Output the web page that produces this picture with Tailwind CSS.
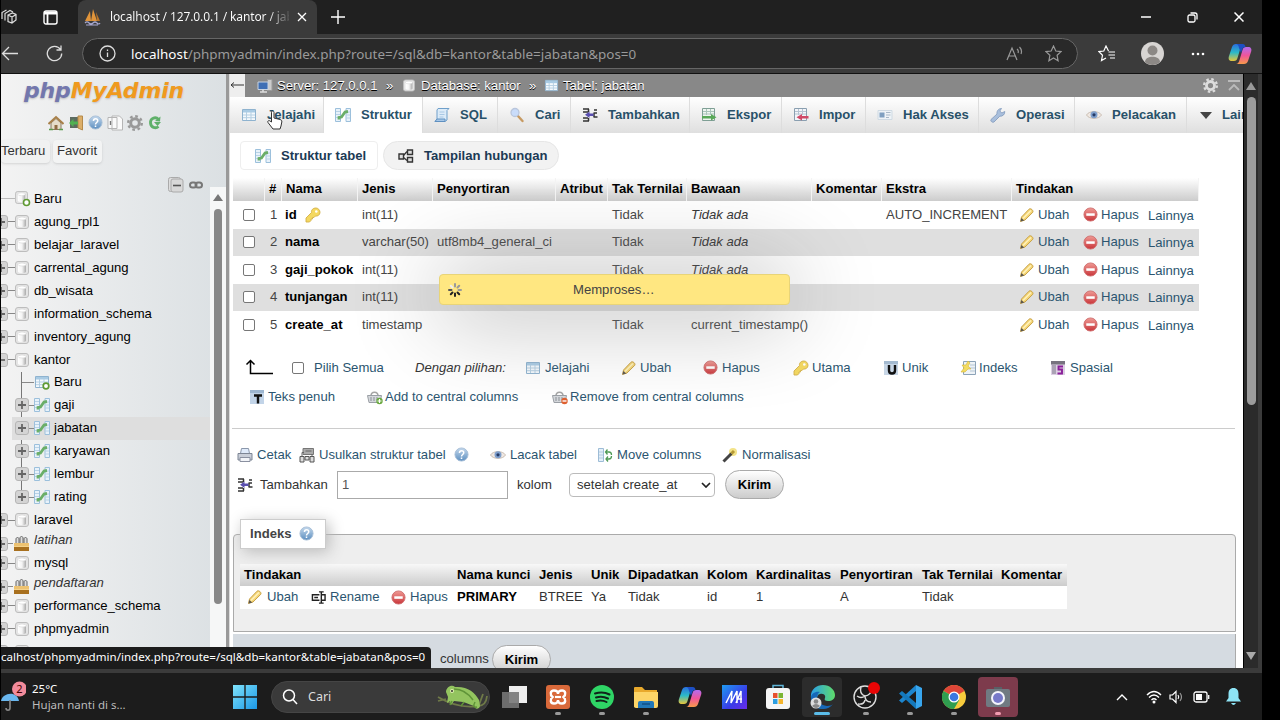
<!DOCTYPE html>
<html lang="id">
<head>
    <meta charset="UTF-8">
    <meta name="viewport" content="width=device-width, initial-scale=1.0">
    <title>localhost / 127.0.0.1 / kantor / jabatan | phpMyAdmin</title>
    <script src="https://cdn.jsdelivr.net/npm/@tailwindcss/browser@4"></script>
    <style>
        body { font-family: 'Liberation Sans', Arial, sans-serif; }
        .ui { font-family: 'Noto Sans', 'Open Sans', sans-serif; }
        .logo { font-family: 'DejaVu Sans', sans-serif; }
    </style>
</head>
<body class="bg-black w-[1280px] h-[720px] overflow-hidden text-[13.1px] leading-4 text-[#444] whitespace-nowrap">

    <!-- Icons -->
    <svg class="absolute w-0 h-0">
        <defs>
            <linearGradient id="gCyl"><stop offset="0" stop-color="#fff"/><stop offset=".5" stop-color="#f4f4f4"/><stop offset="1" stop-color="#aaa"/></linearGradient>
            <linearGradient id="gRed" x2="0" y2="1"><stop offset="0" stop-color="#ef9a94"/><stop offset="1" stop-color="#c9353a"/></linearGradient>
            <linearGradient id="gBlue" x2="0" y2="1"><stop offset="0" stop-color="#c4d8ec"/><stop offset="1" stop-color="#5d8fc0"/></linearGradient>
            <linearGradient id="gWin" x2="1" y2="1"><stop offset="0" stop-color="#7fe3fb"/><stop offset="1" stop-color="#1b97e6"/></linearGradient>
            <linearGradient id="gCopA" x2="0" y2="1"><stop offset="0" stop-color="#2a6fe0"/><stop offset=".5" stop-color="#2cb9c8"/><stop offset="1" stop-color="#e8c63a"/></linearGradient>
            <linearGradient id="gCopB" x2="0" y2="1"><stop offset="0" stop-color="#b26cf0"/><stop offset=".5" stop-color="#f0559a"/><stop offset="1" stop-color="#f79a4a"/></linearGradient>
            <linearGradient id="gMs" x2="1" y2="1"><stop offset="0" stop-color="#1e9bf0"/><stop offset=".6" stop-color="#3a3be8"/><stop offset="1" stop-color="#6a2be8"/></linearGradient>
            <linearGradient id="gEdge" x2="1"><stop offset="0" stop-color="#2a9fe8"/><stop offset="1" stop-color="#5fdc6a"/></linearGradient>
        </defs>
        <symbol id="i-browse" viewBox="0 0 16 16"><path d="M1.500 2.500h13v11h-13z" fill="#f4f9fd" stroke="#8fb3cf"/><path d="M2 3h12v2.500H2z" fill="#a9cbe4"/><path d="M2 8h12M2 10.700h12M5.500 5v8M10 5v8" stroke="#b5cfe2" fill="none"/></symbol>
        <symbol id="i-struct" viewBox="0 0 16 16"><path d="M.5 1.500h5v13h-5zM11 1.500h4.500v13H11z" fill="#e8f2fa" stroke="#9cc0dc"/><path d="M1 4.500h4M1 7.500h4M1 10.500h4M11 5h4M11 8h4M11 11h4" stroke="#b8d2e6"/><path d="M4 12.500V10.500l2.500-.5L10 5l3-.5" stroke="#6aae68" stroke-width="2.800" fill="none"/></symbol>
        <symbol id="i-sql" viewBox="0 0 16 16"><path d="M4 1.500h11l-2 2v9.500l-2 1.500H1l2-2V3z" fill="#dcebf8" stroke="#6f9fca"/><path d="M5.500 5h5M5.500 7.500h5M5.500 10h4" stroke="#a9c8e4"/><path d="M1 14.500 3 12h8v2.500z" fill="#a8c8e8" stroke="#5f90c0"/></symbol>
        <symbol id="i-search" viewBox="0 0 16 16"><path d="m9 9 4.500 5" stroke="#c79a62" stroke-width="2.400" stroke-linecap="round"/><circle cx="6" cy="5.500" r="4" fill="#c9dcfa" stroke="#b9c6dc" stroke-width="1.300"/></symbol>
        <symbol id="i-insert" viewBox="0 0 16 16"><path d="M1 2h6M1 5h5M1 11h5M1 14h6M6.500 2v3M6.500 11v3M12 3h3M11.500 6h3.500M11.500 10h4M12 6v4" fill="none" stroke="#333" stroke-width="1.500"/><path d="M3 7.800 7.500 4.500v2h4v2.600h-4v2z" fill="#5a4fb0"/></symbol>
        <symbol id="i-export" viewBox="0 0 16 16"><path d="M1.500 1.500h12v12h-12z" fill="#eef5f0" stroke="#7f9f95"/><path d="M2 4.500h11M2 7h11M5.500 2v6M9.500 2v6" stroke="#a9c4ba"/><path d="M1 9h9V7l5.500 3.300L10 13.500V11.500H1z" fill="#58a858"/></symbol>
        <symbol id="i-import" viewBox="0 0 16 16"><path d="M1.500 1.500h12v12h-12z" fill="#f3f5f9" stroke="#8a9fb0"/><path d="M2 4.500h11M2 7h11M5.500 2v6M9.500 2v6" stroke="#b6c3d2"/><path d="M15.500 9H9V7l-5.500 3.300L9 13.500V11.500h6.500z" fill="#d04a68"/></symbol>
        <symbol id="i-rights" viewBox="0 0 16 16"><path d="M1 3.500h14v9H1z" fill="#eef3f7" stroke="#cfdae3"/><path d="M2.500 5.500h5v5h-5z" fill="#7f9fc0"/><path d="M9 5.500h4.500M9 8h4.500M9 10.500h3" stroke="#a8b8c8"/></symbol>
        <symbol id="i-tool" viewBox="0 0 16 16"><path d="M1 12.500 7 7c-.5-3 1.500-5.500 4.500-5.500L9.800 4l2 2 3-1.500c.2 3-2.300 5-5 4.700L4 15c-1.500 1-4-1-3-2.500z" fill="#a9bfdc" stroke="#7f98bb" stroke-width=".8"/></symbol>
        <symbol id="i-eye" viewBox="0 0 16 16"><path d="M.5 8C3 3.500 13 3.500 15.500 8 13 12.500 3 12.500.5 8z" fill="#f0e8e2" stroke="#c9bdb2"/><circle cx="8" cy="7.800" r="3.500" fill="#7f9fcc"/><circle cx="8" cy="7.800" r="1.600" fill="#253a66"/></symbol>
        <symbol id="i-rel" viewBox="0 0 16 16"><path d="M1 6h4.500v5H1zM9.500 2h5v4.500h-5zM9.500 9.500h5V14h-5z" fill="#ddd" stroke="#333" stroke-width="1.400"/><path d="M5.500 7.500 9 3.500M5.500 9.500 9 12.500" stroke="#333" stroke-width="1.300" fill="none"/></symbol>
        <symbol id="i-edit" viewBox="0 0 16 16"><path d="M1.500 14.500 2.500 10 10 2.200c1.500-1.500 5 1.300 3.700 3.200L6 13z" fill="#f6d778" stroke="#c29a3d" stroke-width=".9"/><path d="m4 11.500 8-8" stroke="#fff3bf" stroke-width="1.300"/><path d="m1.500 14.500.8-3.500 3 2.500z" fill="#5a564f"/></symbol>
        <symbol id="i-drop" viewBox="0 0 16 16"><circle cx="8" cy="8" r="7" fill="url(#gRed)" stroke="#d07070"/><path d="M3.500 6.700h9v2.700h-9z" fill="#fff"/></symbol>
        <symbol id="i-key" viewBox="0 0 16 16"><path d="M1 14v-3l5.500-5.500C6 3 8 1 11 1c2 0 4 2 4 4.300 0 2.700-2.500 4.200-4.500 3.700L9 10.500H7.500V12H6v1.500L4.500 15H1z" fill="#f4d860" stroke="#d3b04a" stroke-width=".9"/><circle cx="11.300" cy="4.500" r="1.300" fill="#fff"/></symbol>
        <symbol id="i-unique" viewBox="0 0 16 16"><path d="M1 1h14v14H1z" fill="#c7d6e6"/><path d="M1 1h14v3H1z" fill="#a4bad0"/><path d="M6 5v5.500c0 4 6 4 6 0V5" stroke="#111" stroke-width="2.400" fill="none"/></symbol>
        <symbol id="i-index" viewBox="0 0 16 16"><path d="M3.500 1.500h12v13h-12z" fill="#eef3f7" stroke="#8ca3b8"/><path d="M10 5h5M10 8h5M10 11h5" stroke="#b5c5d3"/><path d="m8 1-2 4H2l2 3-3 4h4l3-3h3L8 6l2-3z" fill="#f3dc62" stroke="#d5b53a" stroke-width=".6"/></symbol>
        <symbol id="i-spatial" viewBox="0 0 16 16"><path d="M1 1h14v14H1z" fill="#dccfe3"/><path d="M1 1h14v3.500H1z" fill="#77737f"/><path d="M2 5h4v9H2z" fill="#aaa2b4"/><path d="M13 6.500H8.500v3H12v4H7.500" stroke="#8a1f99" stroke-width="1.900" fill="none"/></symbol>
        <symbol id="i-text" viewBox="0 0 16 16"><path d="M1 1h14v14H1z" fill="#c2d4e8"/><path d="M1 1h14v3H1z" fill="#9db6d0"/><path d="M5 6.500h8M9 6v8.500" stroke="#111" stroke-width="2.400"/></symbol>
        <symbol id="i-basket" viewBox="0 0 16 16"><path d="M4 7c0-5 7-5 7 0" fill="none" stroke="#a5a5a5" stroke-width="1.500"/><path d="M.5 6.500h14l-1.500 7H2z" fill="#d5d8dc" stroke="#9a9fa5"/><path d="M4 8v4M7 8v4M10 8v3" stroke="#8b9096"/></symbol>
        <symbol id="i-central" viewBox="0 0 16 16"><use href="#i-basket"/><circle cx="12.500" cy="12" r="3.200" fill="#69a83f"/><path d="M12.500 10v4M10.500 12h4" stroke="#fff" stroke-width="1.200"/></symbol>
        <symbol id="i-central-del" viewBox="0 0 16 16"><use href="#i-basket"/><circle cx="12.500" cy="12" r="3.200" fill="#e0602f"/><path d="M10.500 12h4" stroke="#fff" stroke-width="1.400"/></symbol>
        <symbol id="i-print" viewBox="0 0 16 16"><path d="M4.500 1.500h7l1 5h-9z" fill="#dfeafa" stroke="#8a97ab"/><path d="M1 6.500h14V13H1z" fill="#c9ced8" stroke="#7d8594"/><path d="M3 10.500h10v4H3z" fill="#f2f4f8" stroke="#8a90a0"/></symbol>
        <symbol id="i-propose" viewBox="0 0 16 16"><path d="M4 1.500h10.500v6H4z" fill="#aaa" stroke="#777"/><path d="M1 9.500h4V15H1zM11 9.500h4V15h-4zM6 9.500h4V13H6z" fill="#ddd" stroke="#555"/><path d="M3 9.500v-4h2M13 9.500V7M6.500 4h6" stroke="#666" fill="none"/></symbol>
        <symbol id="i-help" viewBox="0 0 16 16"><circle cx="8" cy="8" r="7" fill="url(#gBlue)" stroke="#a8bfd8"/><path d="M5.800 6.500c0-3.300 4.600-3 4.600-.3C10.400 8 8 8 8 10M8 11.200v1.500" stroke="#fff" stroke-width="1.600" fill="none"/></symbol>
        <symbol id="i-move" viewBox="0 0 16 16"><path d="M1.500 1.500h5v13h-5z" fill="#e3eff9" stroke="#9dbcd6"/><path d="M2 5h4M2 8h4M2 11h4" stroke="#b4cbe0"/><path d="M8.500 5H12c2 0 2.500 1 2.500 3M10.500 2.500 8.500 5l2 2.500M14.500 9c0 2-1 3-2.500 3H9.500M11 9.500 9 12l2 2.500" stroke="#4f9a55" stroke-width="1.300" fill="none"/></symbol>
        <symbol id="i-wand" viewBox="0 0 16 16"><circle cx="11" cy="5" r="4" fill="#f3e388"/><path d="m1.500 14.500 8-8" stroke="#444" stroke-width="3"/><path d="m9.500 6.500 2.500-2.500" stroke="#b69a35" stroke-width="3"/></symbol>
        <symbol id="i-rename" viewBox="0 0 16 16"><path d="M9 5H1.500v6H9M3.500 8h4M8.500 2h5M8.500 14h5M11 2v12M11 5h4v6h-4" stroke="#222" stroke-width="1.500" fill="none"/></symbol>
        <symbol id="i-db" viewBox="0 0 14 14"><rect x=".5" y=".5" width="13" height="13" rx="2.500" fill="#e4e4e4" stroke="#bdbdbd"/><path d="M3 3.500v7c0 2 8 2 8 0v-7z" fill="url(#gCyl)"/><ellipse cx="7" cy="3.500" rx="4" ry="1.500" fill="#fff" stroke="#ccc" stroke-width=".5"/></symbol>
        <symbol id="i-dbnew" viewBox="0 0 16 16"><use href="#i-db" width="13" height="13"/><circle cx="11.500" cy="11.500" r="3" fill="#fff" stroke="#5f9a33" stroke-width="1.600"/></symbol>
        <symbol id="i-tblnew" viewBox="0 0 16 16"><use href="#i-browse"/><circle cx="12" cy="12" r="2.800" fill="#fff" stroke="#5f9a33" stroke-width="1.700"/></symbol>
        <symbol id="i-group" viewBox="0 0 16 16"><path d="M3 3c0-2 3-2 3 0v5H3zM7 2c0-2 3-2 3 0v6H7zM11 3c0-2 3-2 3 0v5h-3z" fill="#ddd" stroke="#666"/><path d="M1 7h15v3H1z" fill="#edc271"/><path d="M1 10h15v5H1z" fill="#a8701f"/><path d="M1 10.500h15" stroke="#f5d38c"/></symbol>
        <symbol id="i-plus" viewBox="0 0 14 14"><rect x=".5" y=".5" width="13" height="13" rx="2.500" fill="#d4d4d4" stroke="#b5b5b5"/><path d="M3 7h8M7 3v8" stroke="#666" stroke-width="1.800"/></symbol>
        <symbol id="i-minus" viewBox="0 0 14 14"><rect x=".5" y=".5" width="13" height="13" rx="2.500" fill="#d4d4d4" stroke="#b5b5b5"/><path d="M3 7h8" stroke="#666" stroke-width="1.800"/></symbol>
        <symbol id="i-server" viewBox="0 0 16 16"><path d="M10.500 1.500h4.500v11h-4.500z" fill="#ccc" stroke="#999"/><path d="M1 4h10v7.500H1z" fill="#3f6fb5" stroke="#c7d3e2"/><path d="M3 14h7M6 11.500V14" stroke="#ddd" stroke-width="1.600"/></symbol>
        <symbol id="i-gear" viewBox="0 0 16 16"><circle cx="8" cy="8" r="4.300" fill="none" stroke="currentColor" stroke-width="3"/><circle cx="8" cy="8" r="6.800" fill="none" stroke="currentColor" stroke-width="2.400" stroke-dasharray="2.670 2.670"/></symbol>
        <symbol id="i-home" viewBox="0 0 16 16"><path d="M3 8v6.500h10V8L8 3.500z" fill="#e6dcc8" stroke="#8a7a60"/><path d="M.5 9 8 2l7.500 7" fill="none" stroke="#a8804a" stroke-width="2"/><path d="M6.500 10h3v4.500h-3z" fill="#8f6a40"/><path d="M1 14.500h4M11 14.500h4" stroke="#5a9a4a" stroke-width="1.500"/></symbol>
        <symbol id="i-exit" viewBox="0 0 16 16"><path d="M2 2h9v11H2z" fill="#5c6b60"/><path d="M10 1h4.500v14L10 13z" fill="#dcae68" stroke="#b58a4a"/><path d="m1 8 4.500-4v2.500H10v3H5.500V12z" fill="#51b052"/></symbol>
        <symbol id="i-docs" viewBox="0 0 16 16"><path d="M1 2.500h9v11H1zM5 1h7.500L15.500 4v11H5z" fill="#fafafa" stroke="#b5b5b5"/><path d="M3.500 6v4" stroke="#777" stroke-width="1.400"/></symbol>
        <symbol id="i-reload" viewBox="0 0 16 16"><path d="M11.500 4.500C8.500 1 3 3.500 3.500 8s5 6 8 3.500" fill="none" stroke="#5fb06a" stroke-width="2.800"/><path d="M7 7h7l-3.500 4z" fill="#5fb06a"/><path d="m13.500 1.500-.5 5-5-.5z" fill="#5fb06a"/></symbol>
        <symbol id="i-copilot" viewBox="0 0 24 24"><path d="M8 2h8c-2 0-3 2-3.500 4L9.500 16c-.5 2-1.500 3-3.500 3H4c-3 0-4-2-3-5L4 5c.7-2 2-3 4-3z" fill="url(#gCopA)"/><path d="M16 22H8c2 0 3-2 3.500-4l3-10c.5-2 1.500-3 3.500-3h2c3 0 4 2 3 5l-3 9c-.7 2-2 3-4 3z" fill="url(#gCopB)"/><path d="M8 2h6.500c2 0 2.700 1 3 3-2 0-3 1-3.500 3l-1 3-2-5C10.500 3 9.500 2 8 2z" fill="#1d4fc4"/></symbol>
    </svg>

    <div class="flex flex-col w-[1262px] h-[720px] pl-px">

        <!-- Tab strip -->
        <div class="ui flex h-[34px] bg-[#202020] text-white">
            <div class="flex items-center w-[77px]">
                <svg class="w-4 h-[18px] shrink-0" viewBox="0 0 16 18" fill="none" stroke="#ddd" stroke-width="1.200"><path d="m7 7 4.500-2L15 6.500v5.500l-4 3-4-1.500zM7 7l4 2 4-2.500M11 9v6M4 12.500V5.500l5-3L12 4M1 11V4.500L5.500 2"/></svg>
                <svg class="w-[15px] h-[15px] ml-[26px]" viewBox="0 0 15 15" fill="none" stroke="#fff" stroke-width="1.400"><rect x="1" y="1" width="13" height="13" rx="2"/><path d="M1 3h13" stroke-width="3"/><path d="M4.500 3v11" stroke-width="1.800"/></svg>
            </div>
            <div class="flex items-center w-[239px] h-[34px] rounded-t-lg bg-[#3b3b3b] pl-1.5">
                <svg class="w-[17px] h-[17px]" viewBox="0 0 17 17"><path d="M1 12 6 2l1 10zM7 12 9 0l4 12z" fill="#e0943a"/><path d="m12 3 4 9h-3z" fill="#b8752a"/><path d="M1 14q2-2 4 0t4 0 4 0 3 0M2 16h12" stroke="#a7a7cf" stroke-width="1.200" fill="none"/></svg>
                <div class="ml-[9px] w-[179px] overflow-hidden text-[12px] tracking-[-0.120px] bg-linear-to-r from-white from-88% to-[#555] bg-clip-text text-transparent">localhost / 127.0.0.1 / kantor / jab</div>
                <svg class="w-2.5 h-2.5 ml-[8px]" viewBox="0 0 10 10" stroke="#fff" stroke-width="1.300"><path d="m1 1 8 8M9 1 1 9"/></svg>
            </div>
            <svg class="w-3.5 h-3.5 ml-[14px] mt-2.5" viewBox="0 0 14 14" stroke="#fff" stroke-width="1.400"><path d="M7 0v14M0 7h14"/></svg>
            <div class="flex items-center ml-auto mr-[18px] gap-[36px]">
                <svg class="w-[10px] h-2.5" viewBox="0 0 10 10" stroke="#fff" stroke-width="1.500"><path d="M0 5h10"/></svg>
                <svg class="w-[11px] h-[11px]" viewBox="0 0 11 11" fill="none" stroke="#fff" stroke-width="1.300"><rect x="1" y="3" width="7" height="7" rx="1.500"/><path d="M3.500 1H8c1.500 0 2 .8 2 2v4.500"/></svg>
                <svg class="w-2.5 h-2.5" viewBox="0 0 10 10" stroke="#fff" stroke-width="1.500"><path d="m.5.500 9 9M9.500.500l-9 9"/></svg>
            </div>
        </div>

        <!-- Address bar -->
        <div class="ui flex items-center h-[39px] bg-[#3b3b3b] text-white">
            <svg class="w-[17px] h-[15px]" viewBox="0 0 17 15" fill="none" stroke="#ddd" stroke-width="1.300"><path d="M17 7.500H2M8 1 1.500 7.500 8 14"/></svg>
            <svg class="w-[17px] h-[17px] ml-[28px]" viewBox="0 0 17 17" fill="none" stroke="#ddd" stroke-width="1.300"><path d="M14.500 4.500A7.200 7.200 0 1 0 15.700 8.500M15 .5v4.500h-4.500"/></svg>
            <div class="flex items-center ml-[19px] w-[996px] h-[31px] rounded-full border border-[#666] bg-[#292929] pl-4 pr-[15px]">
                <svg class="w-[17px] h-[17px]" viewBox="0 0 17 17" fill="none" stroke="#ddd" stroke-width="1.300"><circle cx="8.500" cy="8.500" r="7.500"/><path d="M8.500 7.500V12M8.500 4.500v1.600"/></svg>
                <div class="ml-[15px] text-[13.450px] leading-5 text-[#9a9a9a]"><span class="text-white">localhost</span>/phpmyadmin/index.php?route=/sql&amp;db=kantor&amp;table=jabatan&amp;pos=0</div>
                <svg class="w-[17px] h-4 ml-auto" viewBox="0 0 17 16" fill="none" stroke="#999" stroke-width="1.200"><path d="m1 14 5-12 5 12M3 10h6M11 3q2 1.500 1 4M13.500 1q3 3 1.500 7"/></svg>
                <svg class="w-[17px] h-[17px] ml-[22px]" viewBox="0 0 17 17" fill="none" stroke="#999" stroke-width="1.200"><path d="m8.500 1 2.300 5 5.200.6-3.900 3.700 1 5.400-4.600-2.700-4.600 2.700 1-5.400L1 6.600 6.200 6z"/></svg>
            </div>
            <svg class="w-[17px] h-[17px] ml-[20px]" viewBox="0 0 17 17" fill="none" stroke="#fff" stroke-width="1.200"><path d="M10.500 6 8 1 5.800 6 1 6.600l3.500 3.700-1 5.200L8 13M10.500 7H17M10.500 10H17M12 13h5"/></svg>
            <svg class="w-[23px] h-[23px] ml-[26px]" viewBox="0 0 23 23"><circle cx="11.500" cy="11.500" r="11.500" fill="#d8d5d3"/><circle cx="11.500" cy="8.500" r="5" fill="#8c8885"/><path d="M4 20c0-7 15-7 15 0-4 4-11 4-15 0z" fill="#8c8885"/></svg>
            <svg class="w-[14px] h-1 ml-[27px]" viewBox="0 0 14 4" fill="#fff"><circle cx="2" cy="2" r="1.300"/><circle cx="7" cy="2" r="1.300"/><circle cx="12" cy="2" r="1.300"/></svg>
            <svg class="w-6 h-6 ml-[23px]"><use href="#i-copilot"/></svg>
        </div>

        <div class="relative flex h-[600px] bg-[#3b3b3b] border-t border-[#111] pb-[5px]">

            <!-- Navigation panel -->
            <div class="flex flex-col w-[225px] h-[594px] overflow-hidden bg-linear-to-r from-[#f3f3f3] to-[#dbe0e3] text-black">
                <div class="logo h-[34px] pt-[4px] pl-[23px] text-[22px] leading-[26px] tracking-[-0.150px] font-bold italic text-[#7377ad] [text-shadow:0_1px_2px_#bbb]">php<span class="text-[#f09a1e]">MyAdmin</span></div>
                <div class="flex gap-[4px] pl-[47px] pt-[7px] h-8 text-[#999]">
                    <svg class="w-4 h-4"><use href="#i-home"/></svg>
                    <svg class="w-4 h-4"><use href="#i-exit"/></svg>
                    <svg class="w-[15px] h-[15px]"><use href="#i-help"/></svg>
                    <svg class="w-4 h-4"><use href="#i-docs"/></svg>
                    <svg class="w-4 h-4"><use href="#i-gear"/></svg>
                    <svg class="w-4 h-4"><use href="#i-reload"/></svg>
                </div>
                <div class="flex gap-[3px] h-[26px] text-[#333]">
                    <div class="w-[49px] pt-[3px] h-[23px] bg-[#f0f1f1] rounded-sm shadow-sm">Terbaru</div>
                    <div class="w-[49px] pt-[3px] pl-1 h-[23px] bg-[#f3f4f4] rounded-sm shadow-sm">Favorit</div>
                </div>
                <div class="flex items-center gap-1 h-[20.500px] pl-[167px] pt-[18px]">
                    <svg class="w-4 h-4 shrink-0" viewBox="0 0 16 16" stroke="#aaa"><rect x=".5" y=".5" width="12" height="14" rx="2" fill="#ddd"/><rect x="3" y="2" width="12" height="13" rx="2" fill="#d8d8d8"/><path d="M5 8.500h8" stroke="#555" stroke-width="1.600"/></svg>
                    <svg class="w-4 h-4" viewBox="0 0 16 16" fill="none" stroke="#777" stroke-width="2"><rect x="2" y="5.500" width="6.500" height="5" rx="2.500"/><rect x="7.500" y="5.500" width="6.500" height="5" rx="2.500"/></svg>
                </div>
                <div class="relative flex-1 overflow-hidden">
                    <div class="absolute left-[20px] top-[185px] w-px h-[126px] bg-[#777]"></div>
                    <div id="tree" class="relative pt-px"></div>
                    <div class="absolute right-0 -top-px w-4 h-[463px] bg-[#f6f7f7] flex flex-col items-center">
                        <div class="mt-2 border-x-[5px] border-x-transparent border-b-[7px] border-b-[#777]"></div>
                        <div class="mt-2 w-2 h-[395px] rounded-full bg-[#888]"></div>
                    </div>
                </div>
            </div>
            <div class="w-[4px] h-[594px] bg-[#999] border-r border-[#ddd]"></div>

            <!-- Main frame -->
            <div class="relative w-[1013px] h-[594px] bg-white overflow-hidden">
                <div class="flex h-[23px]">
                    <div class="w-[15px] bg-[#eee] text-black pt-[3px]"><svg class="w-3.5 h-4" viewBox="0 0 14 16" fill="none" stroke="#333"><path d="M14 8H1M4 5.500 1 8l3 2.500"/></svg></div>
                    <div class="flex items-center flex-1 bg-[#888] pl-[12px] text-white [text-shadow:0_1px_0_#000]">
                        <svg class="w-4 h-4"><use href="#i-server"/></svg>
                        <span class="ml-1 w-[109px]">Server: 127.0.0.1</span>
                        <span class="w-[17px]">»</span>
                        <svg class="w-[12px] h-[13px]"><use href="#i-db"/></svg>
                        <span class="ml-1.5 w-[108px]">Database: kantor</span>
                        <span class="w-[15px]">»</span>
                        <svg class="w-[15px] h-[15px]"><use href="#i-browse"/></svg>
                        <span class="ml-1">Tabel: jabatan</span>
                        <svg class="w-[15px] h-[15px] ml-auto text-[#ddd]"><use href="#i-gear"/></svg>
                        <svg class="w-3 h-3 ml-2.5 mr-[3px]" viewBox="0 0 12 12" fill="none" stroke="#bbb" stroke-width="1.800"><path d="M0 1h12M1 10l5-5 5 5"/></svg>
                    </div>
                </div>
                <div id="tabs" class="flex h-[36px] font-bold text-[#285169]"></div>

                <div class="flex gap-[5px] pl-[10px] pt-[8px] h-[45px] font-bold text-[#1c3a55]">
                    <div class="flex items-center w-[138px] h-[29px] pl-[14px] gap-2.5 border border-[#eee] rounded-sm"><svg class="w-4 h-4"><use href="#i-struct"/></svg>Struktur tabel</div>
                    <div class="flex items-center w-[176px] h-[29px] pl-[14px] gap-2.5 rounded-full bg-[#f2f2f2] border border-[#e6e6e6]"><svg class="w-4 h-4"><use href="#i-rel"/></svg>Tampilan hubungan</div>
                </div>

                <div id="columns" class="ml-[3px] w-[966px]"></div>

                <!-- Actions for selected columns -->
                <div class="flex items-center h-[28px] mt-[15px] pl-[15px] text-[#2b5570]">
                    <svg class="w-[29px] h-[17px]" viewBox="0 0 29 17" fill="none" stroke="#000" stroke-width="1.500"><path d="M5.500 2v12.500H28M1.500 5.500l4-4 4 4"/></svg>
                    <span class="ml-[18px] w-3 h-3 rounded-[2px] border border-[#777] bg-white"></span>
                    <span class="ml-[10px] w-[101px]">Pilih Semua</span>
                    <i class="w-[110px] text-[#333]">Dengan pilihan:</i>
                    <span class="flex items-center w-[96px] gap-1"><svg class="w-4 h-4"><use href="#i-browse"/></svg>Jelajahi</span>
                    <span class="flex items-center w-[82px] gap-[3px]"><svg class="w-4 h-4"><use href="#i-edit"/></svg>Ubah</span>
                    <span class="flex items-center w-[90px] gap-1"><svg class="w-[15px] h-[15px]"><use href="#i-drop"/></svg>Hapus</span>
                    <span class="flex items-center w-[90px] gap-[3px]"><svg class="w-4 h-4"><use href="#i-key"/></svg>Utama</span>
                    <span class="flex items-center w-[77px] gap-[3px]"><svg class="w-4 h-4"><use href="#i-unique"/></svg>Unik</span>
                    <span class="flex items-center w-[90px] gap-[3px]"><svg class="w-4 h-4"><use href="#i-index"/></svg>Indeks</span>
                    <span class="flex items-center gap-[4px]"><svg class="w-4 h-4"><use href="#i-spatial"/></svg>Spasial</span>
                </div>
                <div class="flex items-center h-[30px] pl-[19px] text-[#2b5570]">
                    <span class="flex items-center w-[118px] gap-[3px]"><svg class="w-4 h-4"><use href="#i-text"/></svg>Teks penuh</span>
                    <span class="flex items-center w-[185px] gap-[2px]"><svg class="w-4 h-4"><use href="#i-central"/></svg>Add to central columns</span>
                    <span class="flex items-center gap-[2px]"><svg class="w-4 h-4"><use href="#i-central-del"/></svg>Remove from central columns</span>
                </div>
                <div class="mt-4 ml-[2px] w-[1003px] h-px bg-[#ccc]"></div>

                <div class="flex items-center h-[26px] mt-[13px] pl-[7px] text-[#2b5570]">
                    <span class="flex items-center w-[62px] gap-[4px]"><svg class="w-4 h-4"><use href="#i-print"/></svg>Cetak</span>
                    <span class="flex items-center w-[155px] gap-[4px]"><svg class="w-4 h-4"><use href="#i-propose"/></svg>Usulkan struktur tabel</span>
                    <svg class="w-[15px] h-[15px] mr-[21px]"><use href="#i-help"/></svg>
                    <span class="flex items-center w-[107px] gap-1"><svg class="w-4 h-4"><use href="#i-eye"/></svg>Lacak tabel</span>
                    <span class="flex items-center w-[125px] gap-[4px]"><svg class="w-4 h-4"><use href="#i-move"/></svg>Move columns</span>
                    <span class="flex items-center gap-[4px]"><svg class="w-4 h-4"><use href="#i-wand"/></svg>Normalisasi</span>
                </div>
                <div class="flex items-center h-[34px] pl-[7px] text-[#333]">
                    <svg class="w-4 h-4"><use href="#i-insert"/></svg>
                    <span class="ml-[7px] w-[77px]">Tambahkan</span>
                    <span class="w-[171px] h-[28px] border border-[#aaa] px-1 pt-[5px] text-[#555]">1</span>
                    <span class="ml-[9px] w-[52px]">kolom</span>
                    <span class="flex items-center w-[146px] h-6 border border-[#bbb] rounded-sm pl-[7px]">setelah create_at<svg class="w-2.5 h-1.5 ml-auto mr-[3px]" viewBox="0 0 10 6" fill="none" stroke="#222" stroke-width="1.700"><path d="m1 1 4 4 4-4"/></svg></span>
                    <span class="ml-[10px] w-[59px] h-[29px] rounded-full border border-[#aaa] bg-linear-to-b from-white to-[#ccc] text-center pt-[6px] font-bold text-black">Kirim</span>
                </div>

                <!-- Indexes -->
                <div class="relative mt-[32px] ml-[3px] w-[1003px] h-[98px] rounded-t-sm border border-[#aaa] bg-[#eee] pt-[29px] pl-[6px]">
                    <div class="absolute -top-4 left-[6px] flex items-center w-[86px] h-[30px] gap-[8px] pl-[9px] bg-white border border-[#ccc] shadow-[3px_3px_15px_#bbb] font-bold text-[#444]">Indeks<svg class="w-[15px] h-[15px]"><use href="#i-help"/></svg></div>
                    <div class="w-[827px] grid grid-cols-[214px_81px_52px_37px_79px_49px_84px_82px_79px_70px] text-[#333]">
                        <div class="col-span-full grid grid-cols-subgrid h-[22px] items-center font-bold text-black bg-linear-to-b from-[#f8f8f8] to-[#ccc]">
                            <span class="pl-[4px]">Tindakan</span><span class="pl-[3px]">Nama kunci</span><span class="pl-1">Jenis</span><span class="pl-1">Unik</span><span class="pl-1">Dipadatkan</span><span class="pl-1">Kolom</span><span class="pl-1">Kardinalitas</span><span class="pl-1">Penyortiran</span><span class="pl-1">Tak Ternilai</span><span class="pl-1">Komentar</span>
                        </div>
                        <div class="col-span-full grid grid-cols-subgrid h-[23px] items-center bg-white">
                            <div class="flex items-center pl-[7px] text-[#2b5570]">
                                <span class="flex items-center w-[64px] gap-1"><svg class="w-4 h-4"><use href="#i-edit"/></svg>Ubah</span>
                                <span class="flex items-center w-[80px] gap-1"><svg class="w-[15px] h-[15px]"><use href="#i-rename"/></svg>Rename</span>
                                <span class="flex items-center gap-1"><svg class="w-[15px] h-[15px]"><use href="#i-drop"/></svg>Hapus</span>
                            </div>
                            <b class="pl-[3px] text-black">PRIMARY</b><span class="pl-1">BTREE</span><span class="pl-1">Ya</span><span class="pl-1">Tidak</span><span class="pl-1">id</span><span class="pl-1">1</span><span class="pl-1">A</span><span class="pl-1">Tidak</span><span></span>
                        </div>
                    </div>
                </div>
                <div class="ml-[3px] mt-[2px] w-[1003px] h-[37px] flex bg-[#d5dbe1] border-r border-[#aaa] pl-[207px] text-[#333]">
                    <span class="w-[52px] pt-[17px]">columns</span>
                    <span class="w-[59px] h-[29px] mt-[11px] rounded-full border border-[#aaa] bg-linear-to-b from-white to-[#ccc] text-center pt-[6px] font-bold text-black">Kirim</span>
                </div>

                <!-- Loading notification -->
                <div class="absolute left-[209px] top-[200px] flex items-center w-[351px] h-[31px] rounded border border-[#e8d478] bg-[#ffe781] shadow-[0_5px_90px_#888] text-[#444]">
                    <svg class="w-4 h-4 ml-[7px]" viewBox="0 0 16 16" stroke-width="2" stroke-linecap="round"><path d="m8 2 0 2.500M12.200 3.800 10.500 5.500M14 8h-2.500" stroke="#999"/><path d="M12.200 12.200 10.500 10.500M8 14v-2.500M3.800 12.200 5.500 10.500" stroke="#222"/><path d="M2 8h2.500" stroke="#555"/><path d="M3.800 3.800 5.500 5.500" stroke="#eee"/></svg>
                    <span class="ml-[110px]">Memproses…</span>
                </div>

                <!-- Pointer -->
                <svg class="absolute left-[36px] top-[36px] w-[17px] h-[20px]" viewBox="0 0 17 20"><path d="M5.500 12V2.500c0-2 2.500-2 2.500 0V8l6 1.500c1.500.5 2 1 1.800 2.500L15 16l-1 3H7l-5-6.500c-1-1.500 1-2.500 2-1.500z" fill="#fff" stroke="#333"/></svg>
            </div>

            <!-- Page scrollbar -->
            <div class="flex flex-col items-center w-[15px] h-[594px] bg-[#2b2b2b] border-l border-black">
                <div class="mt-2 border-x-[5px] border-x-transparent border-b-[8px] border-b-[#999]"></div>
                <div class="mt-[7px] w-[9px] h-[308px] rounded-full bg-[#9c9c9c]"></div>
                <div class="mt-auto mb-2 border-x-[5px] border-x-transparent border-t-[8px] border-t-[#aaa]"></div>
            </div>

            <div class="ui absolute left-0 top-[573px] w-[430px] h-[22px] bg-[#1c1c1c] rounded-tr text-white text-[11.550px] leading-5">calhost/phpmyadmin/index.php?route=/sql&amp;db=kantor&amp;table=jabatan&amp;pos=0</div>
        </div>

        <!-- Taskbar -->
        <div class="ui flex items-center h-[47px] bg-[#1c1c1c] text-white">
            <div class="flex w-[232px]">
                <svg class="w-[25px] h-[31px]" viewBox="0 0 25 31"><path d="M0 20C1 12 16 9 18 20z" fill="#69b6ee"/><path d="M9 19v8c0 3-4 3-4 0" stroke="#888" stroke-width="1.600" fill="none"/><circle cx="18.500" cy="8" r="7.500" fill="#f28b9b"/><text x="18.500" y="12" font-size="11" text-anchor="middle" fill="#400">2</text></svg>
                <div class="ml-1.5 text-[11.500px] leading-4">25°C<div class="text-[#bbb]">Hujan nanti di s...</div></div>
            </div>
            <svg class="w-6 h-6" viewBox="0 0 24 24" fill="url(#gWin)"><path d="M0 0h11.300v11.300H0zM12.700 0H24v11.300H12.700zM0 12.700h11.300V24H0zM12.700 12.700H24V24H12.700z"/></svg>
            <div class="flex items-center ml-[14px] w-[219px] h-8 rounded-full bg-[#3a3a3a] border border-[#454545] pl-[10px]">
                <svg class="w-4 h-4" viewBox="0 0 16 16" fill="none" stroke="#fff" stroke-width="1.500"><circle cx="7" cy="6.500" r="5.500"/><path d="m11 10.500 4 4.500"/></svg>
                <span class="ml-[10px] text-[12.500px] text-[#ddd]">Cari</span>
                <svg class="w-[51px] h-[28px] ml-auto mr-px" viewBox="0 0 51 28"><path d="M1 14q20 12 40 9 8 0 9-10M1 18l8-2M42 22l4-11" fill="none" stroke="#6f7a48" stroke-width="1.800"/><path d="M9 9c0-5 6-8 9-5 12-1 20 5 24 13l1 6c-1 4-6 3-5 0-6-1-7-3-12-4l-9-1-3 4-1-4-3 2 1-6z" fill="#93c45f"/><path d="M17 6c8 0 14 4 19 11M15 18l-2 4M27 19l-3 4M38 19q-3 6 2 5" fill="none" stroke="#5f9338" stroke-width="1.500"/><circle cx="15" cy="8" r="2" fill="#dff0b0"/><circle cx="15" cy="8" r=".9" fill="#222"/></svg>
            </div>
            <div class="flex ml-[2px] h-10">
                <div class="flex flex-col items-center w-11 pt-[7px]"><svg class="w-[26px] h-[26px]" viewBox="0 0 26 26"><path d="M8 2h18v17H8z" fill="#eee"/><path d="M1 8h17v16H1z" fill="#777" fill-opacity=".9"/></svg></div>
                <div class="flex flex-col items-center w-11 pt-[8px]"><svg class="w-6 h-6" viewBox="0 0 24 24"><rect width="24" height="24" rx="3" fill="#d9693a"/><path d="M8 5.500c-4 0-4 4.500-1.500 6.500C4 14 4 18.500 8 18.500c2.500 0 4-1.500 4-3.500 0 2 1.500 3.500 4 3.500 4 0 4-4.500 1.500-6.500C20 10 20 5.500 16 5.500c-2.500 0-4 1.500-4 3.500 0-2-1.500-3.500-4-3.500z" fill="none" stroke="#fff" stroke-width="2.400"/><path d="M9 12h6" stroke="#fff" stroke-width="2.200"/></svg><i class="mt-[3px] w-1.5 h-[3px] rounded-full bg-[#999]"></i></div>
                <div class="flex flex-col items-center w-11 pt-[8px]"><svg class="w-6 h-6" viewBox="0 0 24 24"><circle cx="12" cy="12" r="12" fill="#2fd566"/><path d="M5 8.500q8-2.500 14.500 1M6 12.500q6-2 12 1M6.500 16q5.500-1.500 10 1" fill="none" stroke="#10231a" stroke-width="2" stroke-linecap="round"/></svg><i class="mt-[3px] w-1.5 h-[3px] rounded-full bg-[#999]"></i></div>
                <div class="flex flex-col items-center w-11 pt-[8px]"><svg class="w-[26px] h-6" viewBox="0 0 26 24"><path d="M1 3q0-1 1-1h7l3 3h12v17H1z" fill="#e8a92c"/><path d="M1 7h24v14q0 2-2 2H3q-2 0-2-2z" fill="#fcd467"/><path d="M5 23v-5q0-2 2-2h12q2 0 2 2v5z" fill="#2177b8"/><path d="M9 19h8" stroke="#104f86" stroke-width="1.500"/></svg><i class="mt-[3px] w-1.5 h-[3px] rounded-full bg-[#999]"></i></div>
                <div class="flex flex-col items-center w-11 pt-[8px]"><svg class="w-6 h-6"><use href="#i-copilot"/></svg></div>
                <div class="flex flex-col items-center w-11 pt-[8px]"><svg class="w-[25px] h-6" viewBox="0 0 25 24"><path d="M0 0h25v24H0z" fill="url(#gMs)"/><path d="m4 18 6-12-1 12 6-12v12M14 18 19 6v12M16 14h4" fill="none" stroke="#fff" stroke-width="1.500"/></svg></div>
                <div class="flex flex-col items-center w-11 pt-[7px]"><svg class="w-6 h-[26px]" viewBox="0 0 24 26"><path d="M7 5V1.500h10V5" fill="none" stroke="#5fb5d8" stroke-width="1.500"/><rect y="4" width="24" height="21" rx="3" fill="#f5f5f5"/><path d="M7 9h4.500v5H7z" fill="#e8502d"/><path d="M12.500 9H17v5h-4.500z" fill="#7ab534"/><path d="M7 15h4.500v5H7z" fill="#2b9de0"/><path d="M12.500 15H17v5h-4.500z" fill="#f5b52c"/></svg></div>
                <div class="flex flex-col items-center w-11"><div class="flex flex-col items-center w-10 h-10 pt-[8px] rounded bg-[#2c2c2c]"><svg class="w-[25px] h-6" viewBox="0 0 25 24"><path d="M1 13C0 5 6 0 13 0c7 0 12 5 12 10 0 4-3 6-7 6-3 0-4-1-3-3 1-3-2-5-5-4-5 1-5 12 5 14C7 25 1 20 1 13z" fill="url(#gEdge)"/><path d="M1 13c0-5 5-7 9-6-4 2-5 12 7 14 3 0 5-1 6-2-2 3-6 5-10 5C6 24 1 19 1 13z" fill="#1668b8"/><circle cx="6" cy="18" r="5.500" fill="#ddd"/><circle cx="6" cy="16.500" r="2.300" fill="#888"/><path d="M2 21q4-4 8 0-4 4-8 0z" fill="#888"/></svg><i class="mt-[3px] w-4 h-[3px] rounded-full bg-[#5bbce8]"></i></div></div>
                <div class="flex flex-col items-center w-11 pt-[5px]"><svg class="w-[28px] h-[27px]" viewBox="0 0 28 27"><circle cx="13" cy="15" r="11" fill="#1a1a1a" stroke="#ddd" stroke-width="1.400"/><path d="M9 5q-2 7 4 9 6-1 7-7M13 14q-4 3-8 0M13 14q0 6 6 6M6 22q6 1 7-4" fill="none" stroke="#ddd" stroke-width="1.400"/><circle cx="22" cy="6" r="6" fill="#e80505"/></svg><i class="mt-[3px] w-1.5 h-[3px] rounded-full bg-[#999]"></i></div>
                <div class="flex flex-col items-center w-11 pt-[8px]"><svg class="w-[25px] h-6" viewBox="0 0 25 24"><path d="M18 0v6L4 18l-3-2.500z" fill="#1d86cf"/><path d="M18 24v-6L4 6 1 8.500z" fill="#1479bd"/><path d="m18 0 6 3v18l-6 3z" fill="#38a6ee"/></svg><i class="mt-[3px] w-1.5 h-[3px] rounded-full bg-[#999]"></i></div>
                <div class="flex flex-col items-center w-11 pt-[8px]"><svg class="w-6 h-6" viewBox="0 0 24 24"><circle cx="12" cy="12" r="12" fill="#f7cb3c"/><path d="M12 12 1.600 6A12 12 0 0 1 22.400 6z" fill="#dd4538"/><path d="M1.600 6A12 12 0 0 0 12 24l5.200-9L12 12z" fill="#2f9e50"/><circle cx="12" cy="12" r="5.500" fill="#fff"/><circle cx="12" cy="12" r="4.300" fill="#3b78e0"/></svg><i class="mt-[3px] w-1.5 h-[3px] rounded-full bg-[#999]"></i></div>
                <div class="flex flex-col items-center w-11"><div class="flex flex-col items-center w-10 h-10 pt-[9px] rounded bg-[#7d3b4c]"><svg class="w-6 h-[22px]" viewBox="0 0 24 22"><path d="M8 1h8v4H8z" fill="#596066"/><rect y="3" width="24" height="18" rx="2" fill="#707a82"/><circle cx="12" cy="12" r="7" fill="#f4f4fb"/><circle cx="12" cy="12" r="5" fill="#7779c9"/></svg><i class="mt-1 w-1.5 h-[3px] rounded-full bg-[#f29db0]"></i></div></div>
            </div>
            <svg class="w-3 h-2 ml-[96px]" viewBox="0 0 12 8" fill="none" stroke="#fff" stroke-width="1.400"><path d="m1 7 5-5 5 5"/></svg>
            <svg class="w-4 h-[14px] ml-[18px]" viewBox="0 0 16 14" fill="none" stroke="#fff" stroke-width="1.400"><path d="M1 5q7-7 14 0M3 7.500q5-5 10 0M5.500 10q2.500-2.500 5 0"/><circle cx="8" cy="12" r=".8" fill="#fff"/></svg>
            <svg class="w-[15px] h-[14px] ml-[7px]" viewBox="0 0 15 14" fill="none" stroke="#fff" stroke-width="1.200"><path d="M1 5h2.500L7 1.500v11L3.500 9H1zM9 5q1.500 2 0 4"/><path d="M11 3q3 4 0 8" stroke="#999"/></svg>
            <svg class="w-[17px] h-[12px] ml-[9px]" viewBox="0 0 17 12" fill="none" stroke="#fff" stroke-width="1.300"><rect x="1" y="1" width="13" height="10" rx="2"/><path d="M3 3h6v6H3z" fill="#fff" stroke="none"/><path d="M15.700 4v4"/></svg>
            <svg class="w-[15px] h-[19px] ml-[16px]" viewBox="0 0 15 19" fill="#8ee4f5"><path d="M7.500 1C4 1 2.500 3.500 2.500 7v4L0 14.500h15L12.500 11V7c0-3.500-1.500-6-5-6zM5 16h5q-2.500 4-5 0z"/></svg>
        </div>
    </div>

    <script>
        const icon = (name) => `<svg class="w-4 h-4 shrink-0"><use href="#i-${name}"/></svg>`;

        // Top menu: label, icon, width
        const tabs = [
            ['Jelajahi', 'browse', 94], ['Struktur', 'struct', 99], ['SQL', 'sql', 75], ['Cari', 'search', 73],
            ['Tambahkan', 'insert', 119], ['Ekspor', 'export', 92], ['Impor', 'import', 84], ['Hak Akses', 'rights', 113],
            ['Operasi', 'tool', 96], ['Pelacakan', 'eye', 112]
        ];
        document.getElementById('tabs').innerHTML = tabs.map(([label, name, width]) => `
            <div class="flex items-center shrink-0 gap-[10px] pl-[11px] border-r border-[#ddd] ${label === 'Struktur' ? 'bg-white' : 'bg-linear-to-b from-white to-[#dfdfdf]'}" style="width:${width}px">${icon(name)}${label}</div>
        `).join('') + `
            <div class="flex items-center flex-1 pl-[13px] bg-linear-to-b from-white to-[#dfdfdf]">
                <div class="mr-[10px] border-x-[6px] border-x-transparent border-t-[7px] border-t-[#444]"></div>Lainnya
            </div>`;

        // Database tree
        const tree = [
            ['Baru', 'new'], ['agung_rpl1', 'db'], ['belajar_laravel', 'db'], ['carrental_agung', 'db'], ['db_wisata', 'db'],
            ['information_schema', 'db'], ['inventory_agung', 'db'], ['kantor', 'open'], ['Baru', 'tblnew'],
            ['gaji', 'table'], ['jabatan', 'table'], ['karyawan', 'table'], ['lembur', 'table'], ['rating', 'table'],
            ['laravel', 'db'], ['latihan', 'group'], ['mysql', 'db'], ['pendaftaran', 'group'],
            ['performance_schema', 'db'], ['phpmyadmin', 'db'], ['rental', 'db']
        ];
        document.getElementById('tree').innerHTML = tree.map(([label, type]) => {
            if (type === 'table') {
                return `
                <div class="flex items-center h-[22.950px] ml-[11px] pl-[3px] ${label === 'jabatan' ? 'bg-[#dedede]' : ''}">
                    <svg class="w-3.5 h-3.5"><use href="#i-plus"/></svg><span class="w-[5px] h-px bg-[#888]"></span>${icon('struct')}<span class="ml-1">${label}</span>
                </div>`;
            }
            if (type === 'tblnew') {
                return `<div class="flex items-center h-[22.950px] pl-[21px]"><span class="w-3 h-px bg-[#888]"></span>${icon('tblnew')}<span class="ml-1">${label}</span></div>`;
            }
            if (type === 'new') {
                return `<div class="flex items-center h-[22.950px]"><span class="w-3.5 h-px bg-[#bbb]"></span>${icon('dbnew')}<span class="ml-[3px]">${label}</span></div>`;
            }
            if (type === 'group') {
                return `
                <div class="flex items-center h-[20px]">
                    <svg class="w-3.5 h-3.5 -ml-[7px] mt-1"><use href="#i-plus"/></svg><span class="w-[5px] h-px bg-[#888] mt-1"></span><svg class="w-4 h-4 mt-1"><use href="#i-group"/></svg><i class="ml-[5px] -mt-1 text-[#333]">${label}</i>
                </div>`;
            }
            return `
                <div class="flex items-center h-[22.950px]">
                    <svg class="w-3.5 h-3.5 -ml-[7px]"><use href="#${type === 'open' ? 'i-minus' : 'i-plus'}"/></svg><span class="w-[7px] h-px bg-[#888]"></span><svg class="w-3.5 h-3.5"><use href="#i-db"/></svg><span class="ml-[5px]">${label}</span>
                </div>`;
        }).join('');

        // Table structure
        const heads = ['', '#', 'Nama', 'Jenis', 'Penyortiran', 'Atribut', 'Tak Ternilai', 'Bawaan', 'Komentar', 'Ekstra', 'Tindakan'];
        const columns = [
            ['id', 'int(11)', '', '<i class="text-[#333]">Tidak ada</i>', 'AUTO_INCREMENT'],
            ['nama', 'varchar(50)', 'utf8mb4_general_ci', '<i class="text-[#333]">Tidak ada</i>', ''],
            ['gaji_pokok', 'int(11)', '', '<i class="text-[#333]">Tidak ada</i>', ''],
            ['tunjangan', 'int(11)', '', '<i class="text-[#333]">Tidak ada</i>', ''],
            ['create_at', 'timestamp', '', 'current_timestamp()', '']
        ];
        document.getElementById('columns').innerHTML = `
            <div class="grid grid-cols-[32px_17px_76px_75px_123px_52px_79px_125px_70px_130px_187px] h-[23px] font-bold text-black bg-linear-to-b from-white to-[#ccc]">
                ${heads.map((h) => `<div class="pl-1 pt-[3px] border-r border-[#f4f4f4]">${h}</div>`).join('')}
            </div>` + columns.map(([name, type, collation, def, extra], i) => `
            <div class="grid grid-cols-[32px_17px_76px_75px_123px_52px_79px_125px_70px_130px_187px] h-[27.500px] items-center ${i % 2 ? 'bg-[#dfdfdf]' : 'bg-white'}">
                <div class="pl-[10px]"><div class="w-3 h-3 rounded-[2px] border border-[#777] bg-white"></div></div>
                <div class="pl-[5px]">${i + 1}</div>
                <div class="pl-[3px] flex gap-2 font-bold text-black">${name}${i === 0 ? icon('key') : ''}</div>
                <div class="pl-1">${type}</div>
                <div class="pl-1">${collation}</div>
                <div></div>
                <div class="pl-1">Tidak</div>
                <div class="pl-1">${def}</div>
                <div></div>
                <div class="pl-1">${extra}</div>
                <div class="flex items-center pl-[7px] text-[#2b5570]">
                    <span class="flex items-center w-[64px] gap-[3px]">${icon('edit')}Ubah</span>
                    <span class="flex items-center w-[65px] gap-[3px]"><svg class="w-[15px] h-[15px]"><use href="#i-drop"/></svg>Hapus</span>
                    <span class="pt-0.5">Lainnya</span>
                </div>
            </div>`).join('');
    </script>
</body>
</html>
